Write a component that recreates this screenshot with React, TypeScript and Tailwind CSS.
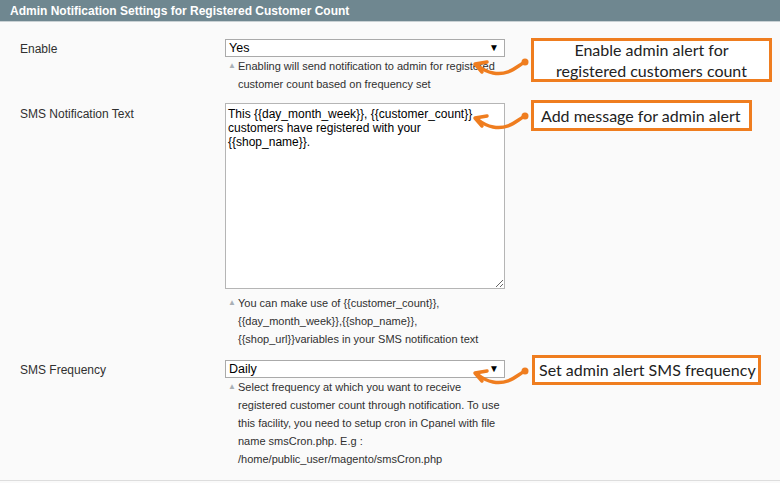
import React from 'react';

const ORANGE = '#ef7d1f';

const Help: React.FC<{ lines: string[]; className?: string }> = ({ lines, className = '' }) => (
  <div className={`relative pl-[13px] text-[11px] leading-[18px] text-[#303030] ${className}`}>
    <span className="absolute left-[3px] top-[0px] text-[8px] text-[#a9b0b6]">▲</span>
    {lines.map((l) => (
      <div key={l} className="whitespace-nowrap">
        {l}
      </div>
    ))}
  </div>
);

const Select: React.FC<{ value: string }> = ({ value }) => (
  <div className="flex h-[18px] w-[280px] items-center justify-between border border-[#aaaaaa] bg-white pl-[3px] pr-[5px] text-[12.5px] text-black">
    <span>{value}</span>
    <span className="text-[10px] leading-none">▼</span>
  </div>
);

// curved annotation arrow, dot on the right, head on the left
const Arrow: React.FC<{ className: string }> = ({ className }) => (
  <svg className={`pointer-events-none absolute ${className}`} width="70" height="30" viewBox="0 0 70 30">
    <path
      d="M60 8 C52 12 44 22 28 19 C22 18 17 15 12 11"
      fill="none"
      stroke={ORANGE}
      strokeWidth="3.5"
      strokeLinecap="round"
    />
    <polyline
      points="22,8 10,10 17,18"
      fill="none"
      stroke={ORANGE}
      strokeWidth="3.5"
      strokeLinecap="round"
      strokeLinejoin="round"
    />
    <circle cx="60" cy="8" r="3.5" fill={ORANGE} />
  </svg>
);

const Callout: React.FC<{ children: React.ReactNode; className?: string }> = ({ children, className = '' }) => (
  <div
    className={`border-[3px] border-[#ef7d1f] bg-white text-[16px] text-[#222222] ${className}`}
    style={{ fontFamily: 'Lato, "Noto Sans", sans-serif' }}
  >
    {children}
  </div>
);

export default function App() {
  return (
    <div
      className="h-[483px] w-[780px] overflow-hidden bg-[#fafafa]"
      style={{ fontFamily: '"Liberation Sans", Arial, sans-serif' }}
    >
      {/* Section header */}
      <div className="flex h-[22px] items-center border-b border-[#c9d1d4] bg-[#6f8790] pl-[10px] text-[12px] font-bold text-white">
        Admin Notification Settings for Registered Customer Count
      </div>

      <div className="border-b border-[#dddddd] pb-[12px] pt-[17px]">
        {/* Enable */}
        <div className="relative flex">
          <div className="w-[225px] pl-[20px] pt-[1px] text-[12px] leading-[18px] text-[#303030]">Enable</div>
          <div className="w-[280px]">
            <Select value="Yes" />
            <Help lines={['Enabling will send notification to admin for registered', 'customer count based on frequency set']} />
          </div>
          <Callout className="-mt-[1px] ml-[26px] flex h-[44px] w-[241px] flex-col items-center justify-center leading-[21px]">
            <span>Enable admin alert for</span>
            <span>registered customers count</span>
          </Callout>
          <Arrow className="left-[465px] top-[15px]" />
        </div>

        {/* SMS Notification Text */}
        <div className="relative mt-[10px] flex">
          <div className="w-[225px] pl-[20px] pt-[2px] text-[12px] leading-[18px] text-[#303030]">
            SMS Notification Text
          </div>
          <div className="w-[280px]">
            <textarea
              readOnly
              defaultValue="This {{day_month_week}}, {{customer_count}} customers have registered with your {{shop_name}}."
              className="block h-[186px] w-[280px] resize border border-[#b5b5b5] bg-white px-[2px] pt-[3px] text-[12px] leading-[14px] text-black outline-none"
              style={{ fontFamily: '"Liberation Sans", Arial, sans-serif' }}
            />
            <Help
              className="mt-[5px]"
              lines={[
                'You can make use of {{customer_count}},',
                '{{day_month_week}},{{shop_name}},',
                '{{shop_url}}variables in your SMS notification text',
              ]}
            />
          </div>
          <Callout className="-mt-[3px] ml-[26px] flex h-[31px] w-[221px] items-center pl-[7px]">
            Add message for admin alert
          </Callout>
          <Arrow className="left-[465px] top-[5px]" />
        </div>

        {/* SMS Frequency */}
        <div className="relative mt-[12px] flex">
          <div className="w-[225px] pl-[20px] pt-[1px] text-[12px] leading-[18px] text-[#303030]">SMS Frequency</div>
          <div className="w-[280px]">
            <Select value="Daily" />
            <Help
              lines={[
                'Select frequency at which you want to receive',
                'registered customer count through notification. To use',
                'this facility, you need to setup cron in Cpanel with file',
                'name smsCron.php. E.g :',
                '/home/public_user/magento/smsCron.php',
              ]}
            />
          </div>
          <Callout className="-mt-[5px] ml-[27px] flex h-[30px] w-[229px] items-center pl-[4px]">
            Set admin alert SMS frequency
          </Callout>
          <Arrow className="left-[465px] top-[3px]" />
        </div>
      </div>
    </div>
  );
}
